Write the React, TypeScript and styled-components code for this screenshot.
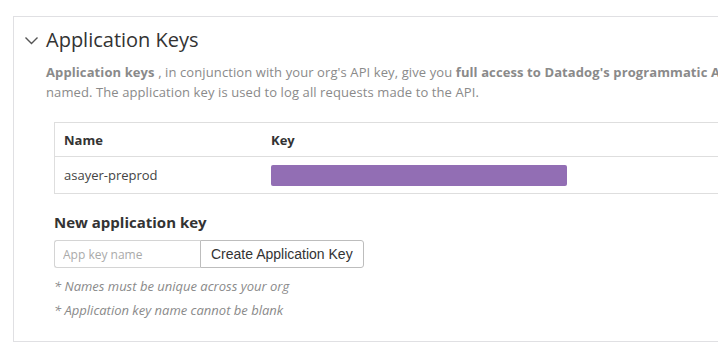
import React from 'react';
import styled, { createGlobalStyle } from 'styled-components';

interface IappKey {
    name: string
    keyWidth: number
}

const keys: IappKey[] = [
    { name: 'asayer-preprod', keyWidth: 296 },
];

const GlobalStyle = createGlobalStyle`
    html, body {
        margin: 0;
        padding: 0;
        background: #fff;
        overflow: hidden;
    }
    body {
        font-family: "Open Sans", "Noto Sans", sans-serif;
        color: #333;
    }
`

const Chevron = () => (
    <svg width="15" height="15" viewBox="0 0 15 15">
        <polyline points="1.5,4.5 7.5,10.5 13.5,4.5" fill="none" stroke="#555" strokeWidth="1.4" />
    </svg>
);

const App = () => {
    return (
        <StPage>
            <GlobalStyle />
            <StPanel>
                <StHeader>
                    <StToggle><Chevron /></StToggle>
                    <StTitle>Application Keys</StTitle>
                </StHeader>
                <StBody>
                    <StDesc>
                        <StLine>
                            <b>Application keys </b>, in conjunction with your org's API key, give you <b>full access to Datadog's programmatic API.</b> Application keys are associated with the user account that created them and can be
                        </StLine>
                        <StLine>named. The application key is used to log all requests made to the API.</StLine>
                    </StDesc>
                    <StTable>
                        <thead>
                            <tr>
                                <StTh>Name</StTh>
                                <StTh>Key</StTh>
                            </tr>
                        </thead>
                        <tbody>
                            {keys.map(k => (
                                <tr key={k.name}>
                                    <StTd>{k.name}</StTd>
                                    <StTd><StRedacted style={{ width: k.keyWidth }} /></StTd>
                                </tr>
                            ))}
                        </tbody>
                    </StTable>
                    <StH4>New application key</StH4>
                    <StForm>
                        <StInput placeholder="App key name" />
                        <StButton>Create Application Key</StButton>
                    </StForm>
                    <StNotes>
                        <StNote>* Names must be unique across your org</StNote>
                        <StNote>* Application key name cannot be blank</StNote>
                    </StNotes>
                </StBody>
            </StPanel>
        </StPage>
    );
};

const StPage = styled.div`
    padding: 16px 0 0 13px;
`

const StPanel = styled.section`
    width: 1200px;
    border: 1px solid #e0e0e3;
    padding-bottom: 19px;
`

const StHeader = styled.div`
    display: flex;
    align-items: center;
    height: 27px;
    margin-top: 9px;
    padding-left: 10px;
`

const StToggle = styled.span`
    display: flex;
    align-items: center;
    width: 22px;
    margin-top: 2px;
`

const StTitle = styled.h2`
    margin: 0;
    font-size: 20px;
    font-weight: 400;
    line-height: 27px;
    color: #333;
`

const StBody = styled.div`
    padding-left: 32px;
`

const StDesc = styled.div`
    margin-top: 9px;
    font-size: 13px;
    line-height: 20px;
    letter-spacing: 0.1px;
    color: #8a8a8a;
    b {
        font-weight: 700;
    }
`

const StLine = styled.div`
    white-space: nowrap;
`

const StTable = styled.table`
    margin: 20px 0 0 8px;
    width: 900px;
    border-collapse: collapse;
    font-size: 13px;
    border: 1px solid #dedede;
`

const StTh = styled.th`
    text-align: left;
    font-weight: 700;
    height: 33px;
    padding: 0 9px;
    color: #333;
    border-bottom: 1px solid #dedede;
    &:first-child {
        width: 189px;
    }
`

const StTd = styled.td`
    height: 36px;
    padding: 0 9px;
    color: #444;
    vertical-align: middle;
`

const StRedacted = styled.div`
    height: 21px;
    margin-top: 1px;
    border-radius: 2px;
    background: #926eb4;
`

const StH4 = styled.h4`
    margin: 18px 0 0 8px;
    font-size: 15px;
    font-weight: 700;
    line-height: 20px;
    color: #333;
`

const StForm = styled.div`
    display: flex;
    margin: 8px 0 0 8px;
    height: 28px;
`

const StInput = styled.input`
    box-sizing: border-box;
    width: 146px;
    height: 28px;
    padding: 0 8px;
    border: 1px solid #d4d4d4;
    border-right: none;
    border-radius: 3px 0 0 3px;
    font-family: "Open Sans", "Noto Sans", sans-serif;
    font-size: 12px;
    color: #333;
    outline: none;
    &::placeholder {
        color: #aaa;
    }
`

const StButton = styled.button`
    box-sizing: border-box;
    height: 28px;
    padding: 0 10px;
    border: 1px solid #bdbdbd;
    border-radius: 0 3px 3px 0;
    background: #fff;
    font-family: "Liberation Sans", Arial, sans-serif;
    font-size: 14px;
    color: #333;
    cursor: pointer;
`

const StNotes = styled.div`
    margin: 6px 0 0 8px;
`

const StNote = styled.div`
    font-size: 13px;
    font-style: italic;
    line-height: 24px;
    color: #8a8a8a;
`

export default App;
